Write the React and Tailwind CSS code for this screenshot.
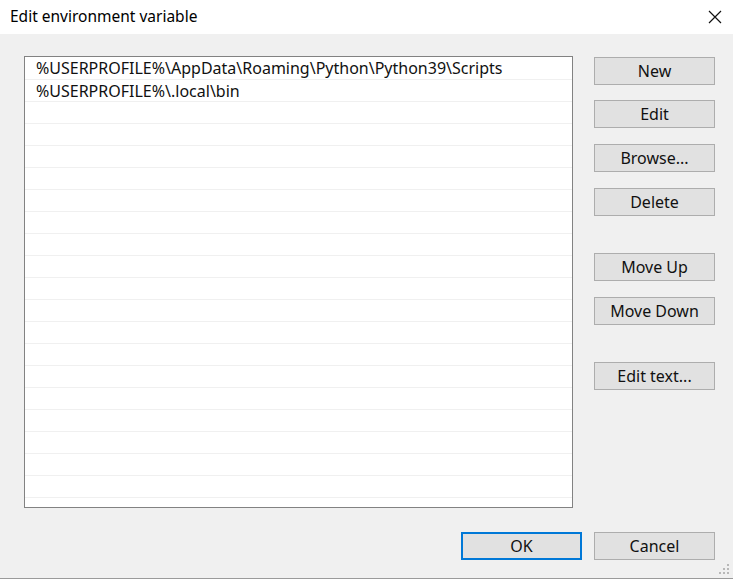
import React from "react";

const paths = [
  "%USERPROFILE%\\AppData\\Roaming\\Python\\Python39\\Scripts",
  "%USERPROFILE%\\.local\\bin",
];

function DialogButton({ label, className = "", primary = false }) {
  return (
    <button
      className={
        "h-[28px] w-[121px] bg-[#e1e1e1] text-[16px] leading-none text-[#111] " +
        (primary ? "border-2 border-[#0078d7] " : "border border-[#adadad] ") +
        className
      }
    >
      {label}
    </button>
  );
}

export default function App() {
  const rows = [];
  for (let i = 0; i < 21; i++) rows.push(paths[i] || "");

  return (
    <div
      className="relative flex h-[579px] w-[733px] flex-col overflow-hidden border-b border-[#9a9a9a] bg-[#f0f0f0]"
      style={{ fontFamily: '"Noto Sans", "Open Sans", sans-serif' }}
    >
      {/* title bar */}
      <div className="flex h-[34px] items-center justify-between bg-white pl-[10px] pr-[11px]">
        <span className="text-[15.5px] text-black">Edit environment variable</span>
        <svg width="14" height="14" viewBox="0 0 14 14" className="text-[#111]">
          <path d="M1 1 L13 13 M13 1 L1 13" stroke="currentColor" strokeWidth="1.2" />
        </svg>
      </div>

      {/* body */}
      <div className="flex flex-1 flex-col pl-[24px] pr-[18px] pt-[22px]">
        <div className="flex gap-[21px]">
          <div className="h-[452px] w-[549px] overflow-hidden border border-[#828282] bg-white">
            {rows.map((p, i) => (
              <div
                key={i}
                className={
                  "flex items-center border-b border-[#f0f0f0] pl-[11px] text-[16px] leading-none text-[#111] " +
                  (i === 0 ? "h-[23px]" : "h-[22px]")
                }
              >
                {p}
              </div>
            ))}
          </div>

          <div className="flex flex-col pt-[1px]">
            <DialogButton label="New" />
            <DialogButton label="Edit" className="mt-[15px]" />
            <DialogButton label="Browse..." className="mt-[16px]" />
            <DialogButton label="Delete" className="mt-[16px]" />
            <DialogButton label="Move Up" className="mt-[37px]" />
            <DialogButton label="Move Down" className="mt-[16px]" />
            <DialogButton label="Edit text..." className="mt-[37px]" />
          </div>
        </div>

        <div className="mt-[24px] flex justify-end gap-[12px]">
          <DialogButton label="OK" primary />
          <DialogButton label="Cancel" />
        </div>
      </div>

      {/* size grip */}
      <svg width="12" height="12" viewBox="0 0 12 12" className="absolute bottom-[3px] right-[3px]">
        <g fill="#b8b8b8">
          <rect x="9" y="1" width="2" height="2" />
          <rect x="5" y="5" width="2" height="2" />
          <rect x="9" y="5" width="2" height="2" />
          <rect x="1" y="9" width="2" height="2" />
          <rect x="5" y="9" width="2" height="2" />
          <rect x="9" y="9" width="2" height="2" />
        </g>
      </svg>
    </div>
  );
}
